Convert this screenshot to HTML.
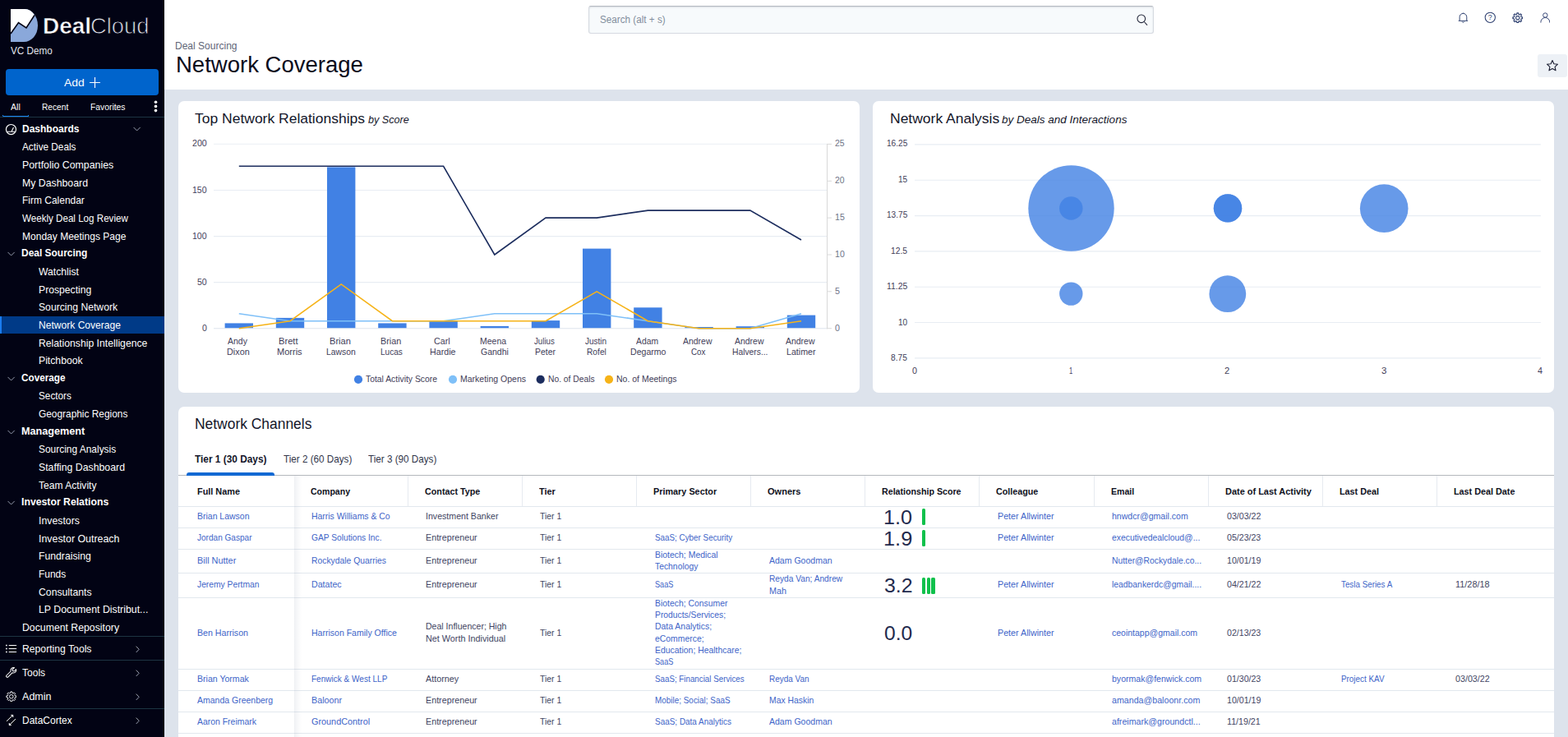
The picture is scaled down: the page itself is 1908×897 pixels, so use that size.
<!DOCTYPE html>
<html lang="en"><head><meta charset="utf-8"><title>Network Coverage - DealCloud</title>
<style>
*{box-sizing:border-box;margin:0;padding:0}
html,body{width:1908px;height:897px;overflow:hidden;background:#dde3ec;font-family:"Liberation Sans",sans-serif;color:#1b1d2e}
body{position:relative}
a{text-decoration:none;color:inherit}
ul,li{list-style:none}
.t{position:absolute;white-space:nowrap;font-weight:400;display:block}
.abs,.ic{position:absolute}
#side{position:absolute;left:0;top:0;width:200px;height:897px;background:#020314;color:#fff;overflow:hidden}
#add{position:absolute;left:7px;top:84px;width:186px;height:32px;border-radius:4px;background:#0064cc;color:#fff}
.sline{position:absolute;left:0;width:200px;height:1px;background:#1c3442}
.selbg{position:absolute;left:0;width:200px;height:21px;background:#003a87;border-left:2px solid #1a7cf0}
#top{position:absolute;left:200px;top:0;width:1708px;height:109px;background:#fff}
#search{position:absolute;left:516px;top:7px;width:688px;height:34px;border:1px solid #d6dae1;border-top-color:#b4b9c0;border-radius:3px;background:#f7fafc;box-shadow:inset 0 1px 2px rgba(40,50,70,.14)}
#star{position:absolute;left:1671px;top:66px;width:36px;height:28px;border-radius:3px;background:#edf1f6}
.card{position:absolute;background:#fff;border-radius:7px;overflow:hidden}
svg text{font-family:"Liberation Sans",sans-serif}
</style></head>
<body>
<aside id="side">
<svg class="ic" style="left:0;top:0" width="200" height="56" viewBox="0 0 200 56">
<path d="M13 11 H30 C38 11 46 19 46 31 C46 43 38 51 29 51 H13 Z" fill="#8aa8da"/>
<path d="M13 11 H30 C35 11 39.5 14 42 18.5 L32 34 L22.5 27.5 L13 41 Z" fill="#ffffff"/>
<path d="M13 41 L22.5 27.5 L32 34 L42 18.5" fill="none" stroke="#020314" stroke-width="1.6"/>
</svg>
<span class="t" style="left:51.62px;top:16.40px;font-size:28px;line-height:31px;transform:scaleX(0.9986);transform-origin:0 25px;font-weight:700;color:#fff;-webkit-text-stroke:0.55px #020314;paint-order:fill stroke">Deal</span><span class="t" style="left:110.08px;top:15.40px;font-size:28.3px;line-height:32px;transform:scaleX(0.9653);transform-origin:0 26px;color:#e6e8f0;-webkit-text-stroke:0.9px #020314;paint-order:fill stroke">Cloud</span>
<span class="t" style="left:13.21px;top:54.70px;font-size:11.9px;line-height:14px;transform:scaleX(0.9840);transform-origin:0 11px;color:#e4e6ee">VC Demo</span>
<div id="add"><svg class="ic" style="left:102px;top:10px" width="13" height="13" viewBox="0 0 13 13"><path d="M6.5 0V13M0 6.5H13" stroke="#fff" stroke-width="1.1" fill="none"/></svg></div>
<span class="t" style="left:78.00px;top:92.90px;font-size:12.9px;line-height:15px;transform:scaleX(1.0803);transform-origin:0 12px;color:#fff">Add</span>
<span class="t" style="left:13.20px;top:124.20px;font-size:11.5px;line-height:12px;transform:scaleX(0.9237);transform-origin:0 10px;color:#fff">All</span><span class="t" style="left:51.09px;top:124.20px;font-size:11.5px;line-height:12px;transform:scaleX(0.8837);transform-origin:0 10px;color:#fff">Recent</span><span class="t" style="left:110.37px;top:124.20px;font-size:11.5px;line-height:12px;transform:scaleX(0.8989);transform-origin:0 10px;color:#fff">Favorites</span>
<svg class="ic" style="left:187px;top:122.1px" width="5" height="15" viewBox="0 0 5 15"><circle cx="2.5" cy="2.2" r="1.8" fill="#fff"/><circle cx="2.5" cy="7.4" r="1.8" fill="#fff"/><circle cx="2.5" cy="12.6" r="1.8" fill="#fff"/></svg>
<div class="abs" style="left:3px;top:140px;width:32px;height:2px;border:1px solid #1a86f2;border-top:0;border-radius:0 0 1.5px 1.5px"></div><div class="sline" style="top:142px"></div>
<nav>
<a class="t" style="left:27.15px;top:149.40px;font-size:13.6px;line-height:15px;transform:scaleX(0.8832);transform-origin:0 12px;font-weight:700;color:#fff">Dashboards</a><svg class="ic" style="left:161.8px;top:154.2px" width="10" height="6" viewBox="0 0 10 6"><path d="M0.5 0.9L4.6 5L8.7 0.9" fill="none" stroke="#959cad" stroke-width="1"/></svg>
<a class="t" style="left:27.10px;top:171.40px;font-size:13.6px;line-height:15px;transform:scaleX(0.8664);transform-origin:0 12px;color:#fff">Active Deals</a>
<a class="t" style="left:27.11px;top:193.40px;font-size:13.6px;line-height:15px;transform:scaleX(0.9082);transform-origin:0 12px;color:#fff">Portfolio Companies</a>
<a class="t" style="left:27.12px;top:215.40px;font-size:13.6px;line-height:15px;transform:scaleX(0.9048);transform-origin:0 12px;color:#fff">My Dashboard</a>
<a class="t" style="left:27.14px;top:236.40px;font-size:13.6px;line-height:15px;transform:scaleX(0.8809);transform-origin:0 12px;color:#fff">Firm Calendar</a>
<a class="t" style="left:27.11px;top:258.40px;font-size:13.6px;line-height:15px;transform:scaleX(0.8538);transform-origin:0 12px;color:#fff">Weekly Deal Log Review</a>
<a class="t" style="left:27.14px;top:280.40px;font-size:13.6px;line-height:15px;transform:scaleX(0.8848);transform-origin:0 12px;color:#fff">Monday Meetings Page</a>
<a class="t" style="left:26.06px;top:300.40px;font-size:13.6px;line-height:15px;transform:scaleX(0.8793);transform-origin:0 12px;font-weight:700;color:#fff">Deal Sourcing</a><svg class="ic" style="left:8.8px;top:306.2px" width="10" height="6" viewBox="0 0 10 6"><path d="M0.5 0.9L4.6 5L8.7 0.9" fill="none" stroke="#959cad" stroke-width="1"/></svg>
<a class="t" style="left:47.00px;top:323.40px;font-size:13.6px;line-height:15px;transform:scaleX(0.8948);transform-origin:0 12px;color:#fff">Watchlist</a>
<a class="t" style="left:47.12px;top:345.40px;font-size:13.6px;line-height:15px;transform:scaleX(0.8964);transform-origin:0 12px;color:#fff">Prospecting</a>
<a class="t" style="left:47.03px;top:366.40px;font-size:13.6px;line-height:15px;transform:scaleX(0.8953);transform-origin:0 12px;color:#fff">Sourcing Network</a>
<div class="selbg" style="top:384.7px"></div><a class="t" style="left:47.23px;top:388.40px;font-size:13.6px;line-height:15px;transform:scaleX(0.8881);transform-origin:0 12px;color:#fff">Network Coverage</a>
<a class="t" style="left:47.22px;top:410.40px;font-size:13.6px;line-height:15px;transform:scaleX(0.8983);transform-origin:0 12px;color:#fff">Relationship Intelligence</a>
<a class="t" style="left:47.22px;top:431.40px;font-size:13.6px;line-height:15px;transform:scaleX(0.8991);transform-origin:0 12px;color:#fff">Pitchbook</a>
<a class="t" style="left:26.04px;top:452.40px;font-size:13.6px;line-height:15px;transform:scaleX(0.8647);transform-origin:0 12px;font-weight:700;color:#fff">Coverage</a><svg class="ic" style="left:8.8px;top:458.2px" width="10" height="6" viewBox="0 0 10 6"><path d="M0.5 0.9L4.6 5L8.7 0.9" fill="none" stroke="#959cad" stroke-width="1"/></svg>
<a class="t" style="left:47.05px;top:474.40px;font-size:13.6px;line-height:15px;transform:scaleX(0.8646);transform-origin:0 12px;color:#fff">Sectors</a>
<a class="t" style="left:47.05px;top:496.40px;font-size:13.6px;line-height:15px;transform:scaleX(0.8742);transform-origin:0 12px;color:#fff">Geographic Regions</a>
<a class="t" style="left:26.01px;top:517.40px;font-size:13.6px;line-height:15px;transform:scaleX(0.9292);transform-origin:0 12px;font-weight:700;color:#fff">Management</a><svg class="ic" style="left:8.8px;top:523.2px" width="10" height="6" viewBox="0 0 10 6"><path d="M0.5 0.9L4.6 5L8.7 0.9" fill="none" stroke="#959cad" stroke-width="1"/></svg>
<a class="t" style="left:47.04px;top:539.40px;font-size:13.6px;line-height:15px;transform:scaleX(0.8780);transform-origin:0 12px;color:#fff">Sourcing Analysis</a>
<a class="t" style="left:47.03px;top:561.40px;font-size:13.6px;line-height:15px;transform:scaleX(0.9038);transform-origin:0 12px;color:#fff">Staffing Dashboard</a>
<a class="t" style="left:47.22px;top:583.40px;font-size:13.6px;line-height:15px;transform:scaleX(0.8882);transform-origin:0 12px;color:#fff">Team Activity</a>
<a class="t" style="left:26.04px;top:603.40px;font-size:13.6px;line-height:15px;transform:scaleX(0.9011);transform-origin:0 12px;font-weight:700;color:#fff">Investor Relations</a><svg class="ic" style="left:8.8px;top:609.2px" width="10" height="6" viewBox="0 0 10 6"><path d="M0.5 0.9L4.6 5L8.7 0.9" fill="none" stroke="#959cad" stroke-width="1"/></svg>
<a class="t" style="left:47.09px;top:626.40px;font-size:13.6px;line-height:15px;transform:scaleX(0.9056);transform-origin:0 12px;color:#fff">Investors</a>
<a class="t" style="left:47.09px;top:648.40px;font-size:13.6px;line-height:15px;transform:scaleX(0.9109);transform-origin:0 12px;color:#fff">Investor Outreach</a>
<a class="t" style="left:47.12px;top:669.40px;font-size:13.6px;line-height:15px;transform:scaleX(0.8989);transform-origin:0 12px;color:#fff">Fundraising</a>
<a class="t" style="left:47.14px;top:691.40px;font-size:13.6px;line-height:15px;transform:scaleX(0.8801);transform-origin:0 12px;color:#fff">Funds</a>
<a class="t" style="left:47.03px;top:713.40px;font-size:13.6px;line-height:15px;transform:scaleX(0.8996);transform-origin:0 12px;color:#fff">Consultants</a>
<a class="t" style="left:47.11px;top:734.40px;font-size:13.6px;line-height:15px;transform:scaleX(0.9069);transform-origin:0 12px;color:#fff">LP Document Distribut...</a>
<a class="t" style="left:27.12px;top:756.40px;font-size:13.6px;line-height:15px;transform:scaleX(0.9030);transform-origin:0 12px;color:#fff">Document Repository</a>
<a class="t" style="left:27.12px;top:782.40px;font-size:13.6px;line-height:15px;transform:scaleX(0.8966);transform-origin:0 12px;color:#fff">Reporting Tools</a><svg class="ic" style="left:164.6px;top:785.9px" width="6" height="10" viewBox="0 0 6 10"><path d="M0.7 0.6L4.2 4.3L0.7 8" fill="none" stroke="#9aa0b0" stroke-width="1"/></svg>
<a class="t" style="left:27.12px;top:811.40px;font-size:13.6px;line-height:15px;transform:scaleX(0.8850);transform-origin:0 12px;color:#fff">Tools</a><svg class="ic" style="left:164.6px;top:814.9px" width="6" height="10" viewBox="0 0 6 10"><path d="M0.7 0.6L4.2 4.3L0.7 8" fill="none" stroke="#9aa0b0" stroke-width="1"/></svg>
<a class="t" style="left:27.10px;top:840.40px;font-size:13.6px;line-height:15px;transform:scaleX(0.9238);transform-origin:0 12px;color:#fff">Admin</a><svg class="ic" style="left:164.6px;top:843.9px" width="6" height="10" viewBox="0 0 6 10"><path d="M0.7 0.6L4.2 4.3L0.7 8" fill="none" stroke="#9aa0b0" stroke-width="1"/></svg>
<a class="t" style="left:27.14px;top:869.40px;font-size:13.6px;line-height:15px;transform:scaleX(0.8832);transform-origin:0 12px;color:#fff">DataCortex</a><svg class="ic" style="left:164.6px;top:872.9px" width="6" height="10" viewBox="0 0 6 10"><path d="M0.7 0.6L4.2 4.3L0.7 8" fill="none" stroke="#9aa0b0" stroke-width="1"/></svg>
</nav>
<div class="sline" style="top:774px"></div><div class="sline" style="top:803px"></div><div class="sline" style="top:861.5px"></div>
<svg class="ic" style="left:6px;top:149.5px" width="15" height="15" viewBox="0 0 15 15"><circle cx="7.46" cy="7.5" r="6.05" fill="none" stroke="#fff" stroke-width="1.15"/><path d="M1.9 10.2H13.1M8.2 9.8L10.5 5" fill="none" stroke="#fff" stroke-width="1.1"/></svg>
<svg class="ic" style="left:6px;top:783px" width="15" height="13" viewBox="0 0 15 13"><path d="M4.7 2.5H14.1M4.7 6.5H14.1M4.7 10.5H14.1" stroke="#fff" stroke-width="1" fill="none"/><path d="M1 2.5H2.7M1 6.5H2.7M1 10.5H2.7" stroke="#fff" stroke-width="1.3" fill="none"/></svg>
<svg class="ic" style="left:6px;top:811px" width="15" height="15" viewBox="0 0 15 15"><path d="M13.7 4.5a3.5 3.5 0 0 1-4.8 3.3L3.9 12.9a1.3 1.3 0 0 1-1.9-1.9l5.1-5A3.5 3.5 0 0 1 11.4 1.6L9.1 3.9l0.4 1.7 1.7 0.4 2.3-2.3z" fill="none" stroke="#fff" stroke-width="1.05" stroke-linejoin="round"/></svg>
<svg class="ic" style="left:6.6px;top:840.7px" width="13.6" height="13.6" viewBox="0 0 15 15"><path d="M6.22 2.67 L6.47 0.98 L8.53 0.98 L8.78 2.67 L10.01 3.18 L11.38 2.16 L12.84 3.62 L11.82 4.99 L12.33 6.22 L14.02 6.47 L14.02 8.53 L12.33 8.78 L11.82 10.01 L12.84 11.38 L11.38 12.84 L10.01 11.82 L8.78 12.33 L8.53 14.02 L6.47 14.02 L6.22 12.33 L4.99 11.82 L3.62 12.84 L2.16 11.38 L3.18 10.01 L2.67 8.78 L0.98 8.53 L0.98 6.47 L2.67 6.22 L3.18 4.99 L2.16 3.62 L3.62 2.16 L4.99 3.18Z" fill="none" stroke="#fff" stroke-width="1.05" stroke-linejoin="round"/><rect x="5.1" y="5.1" width="4.8" height="4.8" rx="2" fill="none" stroke="#fff" stroke-width="1.05"/></svg>
<svg class="ic" style="left:7px;top:869px" width="14" height="15" viewBox="0 0 14 15"><path d="M1 8.8L8.6 1.5M12 6.1L4.4 13.4" fill="none" stroke="#fff" stroke-width="1"/><path d="M6.3 1.2H9V3.9ZM6.7 13.7H4V11Z" fill="#fff" stroke="#fff" stroke-width="0.5" stroke-linejoin="miter"/></svg>
</aside>
<header id="top">
<div id="search"><svg class="ic" style="left:666px;top:9px" width="14" height="15" viewBox="0 0 14 15"><circle cx="5.8" cy="5.8" r="4.8" fill="none" stroke="#23273a" stroke-width="1.1"/><path d="M9.3 9.5L13 13.6" stroke="#23273a" stroke-width="1.1" fill="none"/></svg></div>
<span class="t" style="left:530.37px;top:16.80px;font-size:12px;line-height:14px;transform:scaleX(0.9752);transform-origin:0 11px;color:#828e9d">Search (alt + s)</span>
<span class="t" style="left:13.24px;top:48.90px;font-size:12.3px;line-height:14px;transform:scaleX(0.9780);transform-origin:0 11px;color:#5f6577">Deal Sourcing</span>
<h1 class="t" style="left:13.70px;top:62.20px;font-size:28.2px;line-height:32px;transform:scaleX(0.9762);transform-origin:0 26px;color:#0b0c1c">Network Coverage</h1>
<svg class="ic" style="left:1573.7px;top:15.3px" width="12.9" height="13.8" viewBox="0 0 14 15"><path d="M2.3 11V6.2a4.7 4.7 0 0 1 9.4 0V11M0.8 11.2H13.2M5.6 12.4a1.5 1.5 0 0 0 2.8 0M7 0.6V1.6" fill="none" stroke="#2b3d6e" stroke-width="1.05"/></svg>
<svg class="ic" style="left:1606.3px;top:14.2px" width="14.6" height="14.6" viewBox="0 0 15 15"><circle cx="7.5" cy="7.5" r="6.3" fill="none" stroke="#2b3d6e" stroke-width="1.05"/><text x="7.5" y="10.7" font-size="9" text-anchor="middle" fill="#2b3d6e">?</text></svg>
<svg class="ic" style="left:1639.85px;top:14.7px" width="13.5" height="13.5" viewBox="0 0 15 15"><path d="M6.22 2.67 L6.47 0.98 L8.53 0.98 L8.78 2.67 L10.01 3.18 L11.38 2.16 L12.84 3.62 L11.82 4.99 L12.33 6.22 L14.02 6.47 L14.02 8.53 L12.33 8.78 L11.82 10.01 L12.84 11.38 L11.38 12.84 L10.01 11.82 L8.78 12.33 L8.53 14.02 L6.47 14.02 L6.22 12.33 L4.99 11.82 L3.62 12.84 L2.16 11.38 L3.18 10.01 L2.67 8.78 L0.98 8.53 L0.98 6.47 L2.67 6.22 L3.18 4.99 L2.16 3.62 L3.62 2.16 L4.99 3.18Z" fill="none" stroke="#2b3d6e" stroke-width="1.25" stroke-linejoin="round"/><rect x="5.1" y="5.1" width="4.8" height="4.8" rx="2" fill="none" stroke="#2b3d6e" stroke-width="1.25"/></svg>
<svg class="ic" style="left:1673.8px;top:14.5px" width="12.6" height="13.5" viewBox="0 0 14 15"><circle cx="7" cy="3.9" r="3" fill="none" stroke="#2b3d6e" stroke-width="1.05"/><path d="M1 14V13.2a6 6 0 0 1 12 0V14" fill="none" stroke="#2b3d6e" stroke-width="1.05"/></svg>
<div id="star"><svg class="ic" style="left:10px;top:6px" width="16" height="16" viewBox="0 0 16 16"><path d="M8 1.5l1.9 4.2 4.6.5-3.4 3.1.95 4.5L8 11.5 3.95 13.8l.95-4.5L1.5 6.2l4.6-.5z" fill="none" stroke="#1c1f33" stroke-width="1.1" stroke-linejoin="round"/></svg></div>
</header>
<section class="card" style="left:217px;top:123px;width:829px;height:355px">
<h2 class="t" style="left:19.64px;top:11.00px;font-size:17.4px;line-height:20px;transform:scaleX(1.0056);transform-origin:0 16px;color:#14162a">Top Network Relationships</h2><span class="t" style="left:230.98px;top:15.00px;font-size:13.5px;line-height:15px;transform:scaleX(0.9344);transform-origin:0 12px;font-style:italic;color:#14162a">by Score</span>
<svg class="abs" style="left:0;top:0" width="829" height="355" viewBox="217 123 829 355">
<path d="M260 175.4H1006" stroke="#eff2f6" stroke-width="1.1"/><path d="M260 231.5H1006" stroke="#e8edf3" stroke-width="1.1"/><path d="M260 287.6H1006" stroke="#e8edf3" stroke-width="1.1"/><path d="M260 343.6H1006" stroke="#e8edf3" stroke-width="1.1"/><path d="M260 399.7H1006" stroke="#dde4ec" stroke-width="1.1"/><path d="M1006.5 175V400.3" stroke="#d9d9d9" stroke-width="1"/><path d="M1006 175.4H1012" stroke="#d9d9d9" stroke-width="1"/><path d="M1006 220.3H1012" stroke="#d9d9d9" stroke-width="1"/><path d="M1006 265.1H1012" stroke="#d9d9d9" stroke-width="1"/><path d="M1006 310.0H1012" stroke="#d9d9d9" stroke-width="1"/><path d="M1006 354.8H1012" stroke="#d9d9d9" stroke-width="1"/><path d="M1006 399.7H1012" stroke="#d9d9d9" stroke-width="1"/><rect x="273.6" y="393.4" width="34.4" height="5.8" fill="#4181e4"/><rect x="335.8" y="386.9" width="34.4" height="12.3" fill="#4181e4"/><rect x="398.0" y="203.4" width="34.4" height="195.8" fill="#4181e4"/><rect x="460.2" y="393.4" width="34.4" height="5.8" fill="#4181e4"/><rect x="522.4" y="390.6" width="34.4" height="8.6" fill="#4181e4"/><rect x="584.6" y="396.9" width="34.4" height="2.3" fill="#4181e4"/><rect x="646.8" y="390.1" width="34.4" height="9.1" fill="#4181e4"/><rect x="709.0" y="302.6" width="34.4" height="96.6" fill="#4181e4"/><rect x="771.2" y="374.3" width="34.4" height="24.9" fill="#4181e4"/><rect x="833.4" y="398.0" width="34.4" height="1.2" fill="#4181e4"/><rect x="895.6" y="397.2" width="34.4" height="2.0" fill="#4181e4"/><rect x="957.8" y="383.6" width="34.4" height="15.6" fill="#4181e4"/><polyline points="290.8,202.3 353.0,202.3 415.2,202.3 477.4,202.3 539.6,202.3 601.8,310.0 664.0,265.1 726.2,265.1 788.4,256.1 850.6,256.1 912.8,256.1 975.0,292.0" fill="none" stroke="#1c2d5e" stroke-width="1.6" stroke-linejoin="miter"/><polyline points="290.8,381.8 353.0,390.7 415.2,390.7 477.4,390.7 539.6,390.7 601.8,381.8 664.0,381.8 726.2,381.8 788.4,390.7 850.6,399.7 912.8,399.7 975.0,381.8" fill="none" stroke="#7fc0f8" stroke-width="1.6" stroke-linejoin="miter"/><polyline points="290.8,399.7 353.0,390.7 415.2,345.9 477.4,390.7 539.6,390.7 601.8,390.7 664.0,390.7 726.2,354.8 788.4,390.7 850.6,399.7 912.8,399.7 975.0,390.7" fill="none" stroke="#f6b318" stroke-width="1.6" stroke-linejoin="miter"/><circle cx="436" cy="461.8" r="5.1" fill="#4181e4"/><circle cx="551" cy="461.8" r="5.1" fill="#7fc0f8"/><circle cx="657.7" cy="461.8" r="5.1" fill="#1c2d5e"/><circle cx="741" cy="461.8" r="5.1" fill="#f6b318"/></svg>
<span class="t" style="left:17.08px;top:45.00px;font-size:11.5px;line-height:12px;transform:scaleX(0.9238);transform-origin:0 10px;color:#3f3d58">200</span><span class="t" style="left:17.21px;top:102.00px;font-size:11.5px;line-height:12px;transform:scaleX(0.9171);transform-origin:0 10px;color:#3f3d58">150</span><span class="t" style="left:17.21px;top:158.00px;font-size:11.5px;line-height:12px;transform:scaleX(0.9171);transform-origin:0 10px;color:#3f3d58">100</span><span class="t" style="left:23.05px;top:214.00px;font-size:11.5px;line-height:12px;transform:scaleX(0.9182);transform-origin:0 10px;color:#3f3d58">50</span><span class="t" style="left:28.95px;top:270.00px;font-size:11.5px;line-height:12px;transform:scaleX(0.9110);transform-origin:0 10px;color:#3f3d58">0</span>
<span class="t" style="left:798.99px;top:45.00px;font-size:11.5px;line-height:12px;transform:scaleX(0.9110);transform-origin:0 10px;color:#6e7385">25</span><span class="t" style="left:798.99px;top:90.00px;font-size:11.5px;line-height:12px;transform:scaleX(0.9065);transform-origin:0 10px;color:#6e7385">20</span><span class="t" style="left:798.80px;top:135.00px;font-size:11.5px;line-height:12px;transform:scaleX(0.9264);transform-origin:0 10px;color:#6e7385">15</span><span class="t" style="left:798.80px;top:180.00px;font-size:11.5px;line-height:12px;transform:scaleX(0.9217);transform-origin:0 10px;color:#6e7385">10</span><span class="t" style="left:799.04px;top:225.00px;font-size:11.5px;line-height:12px;transform:scaleX(0.9389);transform-origin:0 10px;color:#6e7385">5</span><span class="t" style="left:799.04px;top:270.00px;font-size:11.5px;line-height:12px;transform:scaleX(0.9291);transform-origin:0 10px;color:#6e7385">0</span>
<span class="t" style="left:59.70px;top:286.00px;font-size:11.5px;line-height:12px;transform:scaleX(0.9115);transform-origin:0 10px;color:#3f3d58">Andy</span><span class="t" style="left:59.13px;top:299.00px;font-size:11.5px;line-height:12px;transform:scaleX(0.9417);transform-origin:0 10px;color:#3f3d58">Dixon</span><span class="t" style="left:122.01px;top:286.00px;font-size:11.5px;line-height:12px;transform:scaleX(0.9705);transform-origin:0 10px;color:#3f3d58">Brett</span><span class="t" style="left:120.02px;top:299.00px;font-size:11.5px;line-height:12px;transform:scaleX(0.9593);transform-origin:0 10px;color:#3f3d58">Morris</span><span class="t" style="left:183.71px;top:286.00px;font-size:11.5px;line-height:12px;transform:scaleX(0.9649);transform-origin:0 10px;color:#3f3d58">Brian</span><span class="t" style="left:180.17px;top:299.00px;font-size:11.5px;line-height:12px;transform:scaleX(0.9012);transform-origin:0 10px;color:#3f3d58">Lawson</span><span class="t" style="left:245.84px;top:286.00px;font-size:11.5px;line-height:12px;transform:scaleX(0.9371);transform-origin:0 10px;color:#3f3d58">Brian</span><span class="t" style="left:246.10px;top:299.00px;font-size:11.5px;line-height:12px;transform:scaleX(0.8747);transform-origin:0 10px;color:#3f3d58">Lucas</span><span class="t" style="left:311.28px;top:286.00px;font-size:11.5px;line-height:12px;transform:scaleX(0.9322);transform-origin:0 10px;color:#3f3d58">Carl</span><span class="t" style="left:306.25px;top:299.00px;font-size:11.5px;line-height:12px;transform:scaleX(0.9282);transform-origin:0 10px;color:#3f3d58">Hardie</span><span class="t" style="left:367.36px;top:286.00px;font-size:11.5px;line-height:12px;transform:scaleX(0.9119);transform-origin:0 10px;color:#3f3d58">Meena</span><span class="t" style="left:367.89px;top:299.00px;font-size:11.5px;line-height:12px;transform:scaleX(0.9139);transform-origin:0 10px;color:#3f3d58">Gandhi</span><span class="t" style="left:432.62px;top:286.00px;font-size:11.5px;line-height:12px;transform:scaleX(0.8448);transform-origin:0 10px;color:#3f3d58">Julius</span><span class="t" style="left:433.87px;top:299.00px;font-size:11.5px;line-height:12px;transform:scaleX(0.9075);transform-origin:0 10px;color:#3f3d58">Peter</span><span class="t" style="left:494.71px;top:286.00px;font-size:11.5px;line-height:12px;transform:scaleX(0.8708);transform-origin:0 10px;color:#3f3d58">Justin</span><span class="t" style="left:497.08px;top:299.00px;font-size:11.5px;line-height:12px;transform:scaleX(0.8875);transform-origin:0 10px;color:#3f3d58">Rofel</span><span class="t" style="left:557.00px;top:286.00px;font-size:11.5px;line-height:12px;transform:scaleX(0.9003);transform-origin:0 10px;color:#3f3d58">Adam</span><span class="t" style="left:549.85px;top:299.00px;font-size:11.5px;line-height:12px;transform:scaleX(0.9197);transform-origin:0 10px;color:#3f3d58">Degarmo</span><span class="t" style="left:614.30px;top:286.00px;font-size:11.5px;line-height:12px;transform:scaleX(0.9093);transform-origin:0 10px;color:#3f3d58">Andrew</span><span class="t" style="left:624.12px;top:299.00px;font-size:11.5px;line-height:12px;transform:scaleX(0.8537);transform-origin:0 10px;color:#3f3d58">Cox</span><span class="t" style="left:676.70px;top:286.00px;font-size:11.5px;line-height:12px;transform:scaleX(0.9093);transform-origin:0 10px;color:#3f3d58">Andrew</span><span class="t" style="left:674.18px;top:299.00px;font-size:11.5px;line-height:12px;transform:scaleX(0.8953);transform-origin:0 10px;color:#3f3d58">Halvers...</span><span class="t" style="left:739.10px;top:286.00px;font-size:11.5px;line-height:12px;transform:scaleX(0.9093);transform-origin:0 10px;color:#3f3d58">Andrew</span><span class="t" style="left:740.05px;top:299.00px;font-size:11.5px;line-height:12px;transform:scaleX(0.9247);transform-origin:0 10px;color:#3f3d58">Latimer</span>
<span class="t" style="left:228.18px;top:332.00px;font-size:11.2px;line-height:12px;transform:scaleX(0.9268);transform-origin:0 10px;color:#3f3d58">Total Activity Score</span><span class="t" style="left:342.76px;top:332.00px;font-size:11.2px;line-height:12px;transform:scaleX(0.9393);transform-origin:0 10px;color:#3f3d58">Marketing Opens</span><span class="t" style="left:449.78px;top:332.00px;font-size:11.2px;line-height:12px;transform:scaleX(0.9194);transform-origin:0 10px;color:#3f3d58">No. of Deals</span><span class="t" style="left:533.06px;top:332.00px;font-size:11.2px;line-height:12px;transform:scaleX(0.9382);transform-origin:0 10px;color:#3f3d58">No. of Meetings</span>
</section>
<section class="card" style="left:1062px;top:123px;width:829px;height:355px">
<h2 class="t" style="left:20.60px;top:11.00px;font-size:17.4px;line-height:20px;transform:scaleX(1.0061);transform-origin:0 16px;color:#14162a">Network Analysis</h2><span class="t" style="left:157.16px;top:15.00px;font-size:13.5px;line-height:15px;transform:scaleX(1.0004);transform-origin:0 12px;font-style:italic;color:#14162a">by Deals and Interactions</span>
<svg class="abs" style="left:0;top:0" width="829" height="355" viewBox="1062 123 829 355">
<path d="M1113 175.9H1874.8" stroke="#e8edf3" stroke-width="1.1"/><path d="M1113 219.2H1874.8" stroke="#e8edf3" stroke-width="1.1"/><path d="M1113 262.6H1874.8" stroke="#e8edf3" stroke-width="1.1"/><path d="M1113 305.9H1874.8" stroke="#e8edf3" stroke-width="1.1"/><path d="M1113 349.2H1874.8" stroke="#e8edf3" stroke-width="1.1"/><path d="M1113 392.5H1874.8" stroke="#e8edf3" stroke-width="1.1"/><path d="M1113 435.9H1874.8" stroke="#e8edf3" stroke-width="1.1"/><circle cx="1303.5" cy="253.5" r="52.2" fill="#4181e4" fill-opacity="0.8"/><circle cx="1303.3" cy="253.5" r="14.2" fill="#4181e4" fill-opacity="0.8"/><circle cx="1494" cy="253.4" r="17.2" fill="#4181e4" fill-opacity="0.8"/><circle cx="1494" cy="253.4" r="17.2" fill="#4181e4" fill-opacity="0.8"/><circle cx="1684.2" cy="253.6" r="29.3" fill="#4181e4" fill-opacity="0.8"/><circle cx="1303.3" cy="357.6" r="14.2" fill="#4181e4" fill-opacity="0.8"/><circle cx="1493.8" cy="357.7" r="22.4" fill="#4181e4" fill-opacity="0.8"/></svg>
<span class="t" style="left:16.94px;top:45.00px;font-size:11.5px;line-height:12px;transform:scaleX(0.8787);transform-origin:0 10px;color:#3f3d58">16.25</span><span class="t" style="left:31.05px;top:89.00px;font-size:11.5px;line-height:12px;transform:scaleX(0.8739);transform-origin:0 10px;color:#3f3d58">15</span><span class="t" style="left:16.94px;top:132.00px;font-size:11.5px;line-height:12px;transform:scaleX(0.8787);transform-origin:0 10px;color:#3f3d58">13.75</span><span class="t" style="left:22.23px;top:176.00px;font-size:11.5px;line-height:12px;transform:scaleX(0.8933);transform-origin:0 10px;color:#3f3d58">12.5</span><span class="t" style="left:16.92px;top:219.00px;font-size:11.5px;line-height:12px;transform:scaleX(0.9072);transform-origin:0 10px;color:#3f3d58">11.25</span><span class="t" style="left:31.05px;top:263.00px;font-size:11.5px;line-height:12px;transform:scaleX(0.8696);transform-origin:0 10px;color:#3f3d58">10</span><span class="t" style="left:22.44px;top:306.00px;font-size:11.5px;line-height:12px;transform:scaleX(0.8839);transform-origin:0 10px;color:#3f3d58">8.75</span>
<span class="t" style="left:47.64px;top:322.30px;font-size:11.5px;line-height:12px;transform:scaleX(0.9291);transform-origin:0 10px;color:#3f3d58">0</span><span class="t" style="left:238.73px;top:322.30px;font-size:11.5px;line-height:12px;transform:scaleX(0.6597);transform-origin:0 10px;color:#3f3d58">1</span><span class="t" style="left:428.26px;top:322.30px;font-size:11.5px;line-height:12px;transform:scaleX(0.9719);transform-origin:0 10px;color:#3f3d58">2</span><span class="t" style="left:619.01px;top:322.30px;font-size:11.5px;line-height:12px;transform:scaleX(0.9938);transform-origin:0 10px;color:#3f3d58">3</span><span class="t" style="left:808.67px;top:322.30px;font-size:11.5px;line-height:12px;transform:scaleX(0.9323);transform-origin:0 10px;color:#3f3d58">4</span>
</section>
<style>
.row{position:absolute;left:0;width:1674px;height:1px;background:#e2e8ee}
.vsep{position:absolute;top:84px;width:1px;height:37px;background:#e6eaf0}
.bar{position:absolute;width:4.3px;height:19.5px;border-radius:1.5px;background:#0fc14c}
.shadow{position:absolute;left:140px;top:84px;width:13px;height:900px;background:linear-gradient(90deg,rgba(150,160,180,0) 0,rgba(150,160,180,0) 0.6px,rgba(150,160,180,.20) 0.7px,rgba(150,160,180,.12) 2px,rgba(150,160,180,0) 10px);z-index:3}
</style>
<section class="card" style="left:217px;top:495px;width:1674px;height:420px;border-radius:7px 7px 0 0">
<h2 class="t" style="left:20.11px;top:11.40px;font-size:17.6px;line-height:20px;transform:scaleX(0.9904);transform-origin:0 16px;color:#14162a">Network Channels</h2>
<span class="t" style="left:20.02px;top:56.90px;font-size:12.2px;line-height:14px;transform:scaleX(0.9733);transform-origin:0 11px;font-weight:700;color:#14162a">Tier 1 (30 Days)</span><span class="t" style="left:127.75px;top:56.90px;font-size:12.2px;line-height:14px;transform:scaleX(0.9582);transform-origin:0 11px;color:#32364a">Tier 2 (60 Days)</span><span class="t" style="left:230.75px;top:56.90px;font-size:12.2px;line-height:14px;transform:scaleX(0.9582);transform-origin:0 11px;color:#32364a">Tier 3 (90 Days)</span>
<div class="abs" style="left:10px;top:80px;width:107px;height:4px;background:#1269d3;border-radius:3px 3px 0 0;z-index:2"></div>
<div class="abs" style="left:0;top:82.7px;width:1674px;height:1.4px;background:#b4b8bd"></div>
<div class="vsep" style="left:279.0px"></div><div class="vsep" style="left:418.0px"></div><div class="vsep" style="left:557.0px"></div><div class="vsep" style="left:696.0px"></div><div class="vsep" style="left:835.0px"></div><div class="vsep" style="left:974.0px"></div><div class="vsep" style="left:1114.0px"></div><div class="vsep" style="left:1253.0px"></div><div class="vsep" style="left:1392.0px"></div><div class="vsep" style="left:1531.0px"></div>
<span class="t" style="left:23.00px;top:97.40px;font-size:11.6px;line-height:12px;transform:scaleX(0.9375);transform-origin:0 10px;font-weight:700;color:#0e1020">Full Name</span><span class="t" style="left:161.00px;top:97.40px;font-size:11.6px;line-height:12px;transform:scaleX(0.9094);transform-origin:0 10px;font-weight:700;color:#0e1020">Company</span><span class="t" style="left:300.00px;top:97.40px;font-size:11.6px;line-height:12px;transform:scaleX(0.9265);transform-origin:0 10px;font-weight:700;color:#0e1020">Contact Type</span><span class="t" style="left:439.00px;top:97.40px;font-size:11.6px;line-height:12px;transform:scaleX(0.9435);transform-origin:0 10px;font-weight:700;color:#0e1020">Tier</span><span class="t" style="left:578.00px;top:97.40px;font-size:11.6px;line-height:12px;transform:scaleX(0.9349);transform-origin:0 10px;font-weight:700;color:#0e1020">Primary Sector</span><span class="t" style="left:717.00px;top:97.40px;font-size:11.6px;line-height:12px;transform:scaleX(0.9512);transform-origin:0 10px;font-weight:700;color:#0e1020">Owners</span><span class="t" style="left:856.00px;top:97.40px;font-size:11.6px;line-height:12px;transform:scaleX(0.9194);transform-origin:0 10px;font-weight:700;color:#0e1020">Relationship Score</span><span class="t" style="left:995.00px;top:97.40px;font-size:11.6px;line-height:12px;transform:scaleX(0.9266);transform-origin:0 10px;font-weight:700;color:#0e1020">Colleague</span><span class="t" style="left:1135.00px;top:97.40px;font-size:11.6px;line-height:12px;transform:scaleX(0.9118);transform-origin:0 10px;font-weight:700;color:#0e1020">Email</span><span class="t" style="left:1274.00px;top:97.40px;font-size:11.6px;line-height:12px;transform:scaleX(0.9440);transform-origin:0 10px;font-weight:700;color:#0e1020">Date of Last Activity</span><span class="t" style="left:1413.00px;top:97.40px;font-size:11.6px;line-height:12px;transform:scaleX(0.9310);transform-origin:0 10px;font-weight:700;color:#0e1020">Last Deal</span><span class="t" style="left:1552.00px;top:97.40px;font-size:11.6px;line-height:12px;transform:scaleX(0.9319);transform-origin:0 10px;font-weight:700;color:#0e1020">Last Deal Date</span>
<div class="row" style="top:120.9px"></div><div class="row" style="top:147.0px"></div><div class="row" style="top:172.8px"></div><div class="row" style="top:201.7px"></div><div class="row" style="top:231.8px"></div><div class="row" style="top:318.8px"></div><div class="row" style="top:344.9px"></div><div class="row" style="top:371.0px"></div><div class="row" style="top:396.9px"></div>
<a class="t" style="left:23.00px;top:127.00px;font-size:11.5px;line-height:12px;transform:scaleX(0.9109);transform-origin:0 10px;color:#4064c8">Brian Lawson</a><a class="t" style="left:162.00px;top:127.00px;font-size:11.5px;line-height:12px;transform:scaleX(0.9072);transform-origin:0 10px;color:#4064c8">Harris Williams &amp; Co</a><span class="t" style="left:301.00px;top:127.00px;font-size:11.5px;line-height:12px;transform:scaleX(0.9229);transform-origin:0 10px;color:#41445f">Investment Banker</span><span class="t" style="left:440.00px;top:127.00px;font-size:11.5px;line-height:12px;transform:scaleX(0.9029);transform-origin:0 10px;color:#41445f">Tier 1</span><span class="t" style="left:858.01px;top:120.85px;font-size:24.6px;line-height:27px;transform:scaleX(1.0226);transform-origin:0 22px;color:#1f2a4d">1.0</span><i class="bar" style="left:904.8px;top:124.4px"></i><a class="t" style="left:997.00px;top:127.00px;font-size:11.5px;line-height:12px;transform:scaleX(0.9330);transform-origin:0 10px;color:#4064c8">Peter Allwinter</a><a class="t" style="left:1136.00px;top:127.00px;font-size:11.5px;line-height:12px;transform:scaleX(0.9169);transform-origin:0 10px;color:#4064c8">hnwdcr@gmail.com</a><span class="t" style="left:1276.00px;top:127.00px;font-size:11.5px;line-height:12px;transform:scaleX(0.9239);transform-origin:0 10px;color:#41445f">03/03/22</span>
<a class="t" style="left:23.00px;top:153.00px;font-size:11.5px;line-height:12px;transform:scaleX(0.8742);transform-origin:0 10px;color:#4064c8">Jordan Gaspar</a><a class="t" style="left:162.00px;top:153.00px;font-size:11.5px;line-height:12px;transform:scaleX(0.8874);transform-origin:0 10px;color:#4064c8">GAP Solutions Inc.</a><span class="t" style="left:301.00px;top:153.00px;font-size:11.5px;line-height:12px;transform:scaleX(0.9338);transform-origin:0 10px;color:#41445f">Entrepreneur</span><span class="t" style="left:440.00px;top:153.00px;font-size:11.5px;line-height:12px;transform:scaleX(0.9029);transform-origin:0 10px;color:#41445f">Tier 1</span><a class="t" style="left:580.00px;top:153.00px;font-size:11.5px;line-height:12px;transform:scaleX(0.8568);transform-origin:0 10px;color:#4064c8">SaaS; Cyber Security</a><span class="t" style="left:858.00px;top:146.80px;font-size:24.6px;line-height:27px;transform:scaleX(1.0307);transform-origin:0 22px;color:#1f2a4d">1.9</span><i class="bar" style="left:904.8px;top:150.4px"></i><a class="t" style="left:997.00px;top:153.00px;font-size:11.5px;line-height:12px;transform:scaleX(0.9330);transform-origin:0 10px;color:#4064c8">Peter Allwinter</a><a class="t" style="left:1136.00px;top:153.00px;font-size:11.5px;line-height:12px;transform:scaleX(0.9009);transform-origin:0 10px;color:#4064c8">executivedealcloud@...</a><span class="t" style="left:1276.00px;top:153.00px;font-size:11.5px;line-height:12px;transform:scaleX(0.9215);transform-origin:0 10px;color:#41445f">05/23/23</span>
<a class="t" style="left:23.00px;top:181.00px;font-size:11.5px;line-height:12px;transform:scaleX(0.9492);transform-origin:0 10px;color:#4064c8">Bill Nutter</a><a class="t" style="left:162.00px;top:181.00px;font-size:11.5px;line-height:12px;transform:scaleX(0.8999);transform-origin:0 10px;color:#4064c8">Rockydale Quarries</a><span class="t" style="left:301.00px;top:181.00px;font-size:11.5px;line-height:12px;transform:scaleX(0.9338);transform-origin:0 10px;color:#41445f">Entrepreneur</span><span class="t" style="left:440.00px;top:181.00px;font-size:11.5px;line-height:12px;transform:scaleX(0.9029);transform-origin:0 10px;color:#41445f">Tier 1</span><a class="t" style="left:580.00px;top:174.00px;font-size:11.5px;line-height:12px;transform:scaleX(0.9090);transform-origin:0 10px;color:#4064c8">Biotech; Medical</a><a class="t" style="left:580.00px;top:188.00px;font-size:11.5px;line-height:12px;transform:scaleX(0.9005);transform-origin:0 10px;color:#4064c8">Technology</a><a class="t" style="left:719.00px;top:181.00px;font-size:11.5px;line-height:12px;transform:scaleX(0.9148);transform-origin:0 10px;color:#4064c8">Adam Goodman</a><a class="t" style="left:1136.00px;top:181.00px;font-size:11.5px;line-height:12px;transform:scaleX(0.8969);transform-origin:0 10px;color:#4064c8">Nutter@Rockydale.co...</a><span class="t" style="left:1276.00px;top:181.00px;font-size:11.5px;line-height:12px;transform:scaleX(0.9227);transform-origin:0 10px;color:#41445f">10/01/19</span>
<a class="t" style="left:23.00px;top:210.00px;font-size:11.5px;line-height:12px;transform:scaleX(0.8947);transform-origin:0 10px;color:#4064c8">Jeremy Pertman</a><a class="t" style="left:162.00px;top:210.00px;font-size:11.5px;line-height:12px;transform:scaleX(0.9255);transform-origin:0 10px;color:#4064c8">Datatec</a><span class="t" style="left:301.00px;top:210.00px;font-size:11.5px;line-height:12px;transform:scaleX(0.9338);transform-origin:0 10px;color:#41445f">Entrepreneur</span><span class="t" style="left:440.00px;top:210.00px;font-size:11.5px;line-height:12px;transform:scaleX(0.9029);transform-origin:0 10px;color:#41445f">Tier 1</span><a class="t" style="left:580.00px;top:210.00px;font-size:11.5px;line-height:12px;transform:scaleX(0.7935);transform-origin:0 10px;color:#4064c8">SaaS</a><a class="t" style="left:719.00px;top:203.00px;font-size:11.5px;line-height:12px;transform:scaleX(0.8844);transform-origin:0 10px;color:#4064c8">Reyda Van; Andrew</a><a class="t" style="left:719.00px;top:218.00px;font-size:11.5px;line-height:12px;transform:scaleX(0.9389);transform-origin:0 10px;color:#4064c8">Mah</a><span class="t" style="left:858.78px;top:203.65px;font-size:24.6px;line-height:27px;transform:scaleX(1.0109);transform-origin:0 22px;color:#1f2a4d">3.2</span><i class="bar" style="left:904.8px;top:208.4px"></i><i class="bar" style="left:910.6px;top:208.4px"></i><i class="bar" style="left:916.4px;top:208.4px"></i><a class="t" style="left:997.00px;top:210.00px;font-size:11.5px;line-height:12px;transform:scaleX(0.9330);transform-origin:0 10px;color:#4064c8">Peter Allwinter</a><a class="t" style="left:1136.00px;top:210.00px;font-size:11.5px;line-height:12px;transform:scaleX(0.9012);transform-origin:0 10px;color:#4064c8">leadbankerdc@gmail....</a><span class="t" style="left:1276.00px;top:210.00px;font-size:11.5px;line-height:12px;transform:scaleX(0.9239);transform-origin:0 10px;color:#41445f">04/21/22</span><a class="t" style="left:1415.00px;top:210.00px;font-size:11.5px;line-height:12px;transform:scaleX(0.8538);transform-origin:0 10px;color:#4064c8">Tesla Series A</a><span class="t" style="left:1554.00px;top:210.00px;font-size:11.5px;line-height:12px;transform:scaleX(0.9467);transform-origin:0 10px;color:#41445f">11/28/18</span>
<a class="t" style="left:23.00px;top:269.00px;font-size:11.5px;line-height:12px;transform:scaleX(0.9238);transform-origin:0 10px;color:#4064c8">Ben Harrison</a><a class="t" style="left:162.00px;top:269.00px;font-size:11.5px;line-height:12px;transform:scaleX(0.9151);transform-origin:0 10px;color:#4064c8">Harrison Family Office</a><span class="t" style="left:301.00px;top:261.00px;font-size:11.5px;line-height:12px;transform:scaleX(0.9165);transform-origin:0 10px;color:#41445f">Deal Influencer; High</span><span class="t" style="left:301.00px;top:276.00px;font-size:11.5px;line-height:12px;transform:scaleX(0.9407);transform-origin:0 10px;color:#41445f">Net Worth Individual</span><span class="t" style="left:440.00px;top:269.00px;font-size:11.5px;line-height:12px;transform:scaleX(0.9029);transform-origin:0 10px;color:#41445f">Tier 1</span><a class="t" style="left:580.00px;top:233.00px;font-size:11.5px;line-height:12px;transform:scaleX(0.9039);transform-origin:0 10px;color:#4064c8">Biotech; Consumer</a><a class="t" style="left:580.00px;top:247.00px;font-size:11.5px;line-height:12px;transform:scaleX(0.8970);transform-origin:0 10px;color:#4064c8">Products/Services;</a><a class="t" style="left:580.00px;top:261.00px;font-size:11.5px;line-height:12px;transform:scaleX(0.9075);transform-origin:0 10px;color:#4064c8">Data Analytics;</a><a class="t" style="left:580.00px;top:276.00px;font-size:11.5px;line-height:12px;transform:scaleX(0.9058);transform-origin:0 10px;color:#4064c8">eCommerce;</a><a class="t" style="left:580.00px;top:290.00px;font-size:11.5px;line-height:12px;transform:scaleX(0.9068);transform-origin:0 10px;color:#4064c8">Education; Healthcare;</a><a class="t" style="left:580.00px;top:304.00px;font-size:11.5px;line-height:12px;transform:scaleX(0.7935);transform-origin:0 10px;color:#4064c8">SaaS</a><span class="t" style="left:858.79px;top:262.20px;font-size:24.6px;line-height:27px;transform:scaleX(0.9994);transform-origin:0 22px;color:#1f2a4d">0.0</span><a class="t" style="left:997.00px;top:269.00px;font-size:11.5px;line-height:12px;transform:scaleX(0.9330);transform-origin:0 10px;color:#4064c8">Peter Allwinter</a><a class="t" style="left:1136.00px;top:269.00px;font-size:11.5px;line-height:12px;transform:scaleX(0.9133);transform-origin:0 10px;color:#4064c8">ceointapp@gmail.com</a><span class="t" style="left:1276.00px;top:269.00px;font-size:11.5px;line-height:12px;transform:scaleX(0.9215);transform-origin:0 10px;color:#41445f">02/13/23</span>
<a class="t" style="left:23.00px;top:325.00px;font-size:11.5px;line-height:12px;transform:scaleX(0.9178);transform-origin:0 10px;color:#4064c8">Brian Yormak</a><a class="t" style="left:162.00px;top:325.00px;font-size:11.5px;line-height:12px;transform:scaleX(0.8719);transform-origin:0 10px;color:#4064c8">Fenwick &amp; West LLP</a><span class="t" style="left:301.00px;top:325.00px;font-size:11.5px;line-height:12px;transform:scaleX(0.9384);transform-origin:0 10px;color:#41445f">Attorney</span><span class="t" style="left:440.00px;top:325.00px;font-size:11.5px;line-height:12px;transform:scaleX(0.9029);transform-origin:0 10px;color:#41445f">Tier 1</span><a class="t" style="left:580.00px;top:325.00px;font-size:11.5px;line-height:12px;transform:scaleX(0.8499);transform-origin:0 10px;color:#4064c8">SaaS; Financial Services</a><a class="t" style="left:719.00px;top:325.00px;font-size:11.5px;line-height:12px;transform:scaleX(0.8678);transform-origin:0 10px;color:#4064c8">Reyda Van</a><a class="t" style="left:1136.00px;top:325.00px;font-size:11.5px;line-height:12px;transform:scaleX(0.9169);transform-origin:0 10px;color:#4064c8">byormak@fenwick.com</a><span class="t" style="left:1276.00px;top:325.00px;font-size:11.5px;line-height:12px;transform:scaleX(0.9215);transform-origin:0 10px;color:#41445f">01/30/23</span><a class="t" style="left:1415.00px;top:325.00px;font-size:11.5px;line-height:12px;transform:scaleX(0.8581);transform-origin:0 10px;color:#4064c8">Project KAV</a><span class="t" style="left:1554.00px;top:325.00px;font-size:11.5px;line-height:12px;transform:scaleX(0.9307);transform-origin:0 10px;color:#41445f">03/03/22</span>
<a class="t" style="left:23.00px;top:351.00px;font-size:11.5px;line-height:12px;transform:scaleX(0.9120);transform-origin:0 10px;color:#4064c8">Amanda Greenberg</a><a class="t" style="left:162.00px;top:351.00px;font-size:11.5px;line-height:12px;transform:scaleX(0.9380);transform-origin:0 10px;color:#4064c8">Baloonr</a><span class="t" style="left:301.00px;top:351.00px;font-size:11.5px;line-height:12px;transform:scaleX(0.9338);transform-origin:0 10px;color:#41445f">Entrepreneur</span><span class="t" style="left:440.00px;top:351.00px;font-size:11.5px;line-height:12px;transform:scaleX(0.9029);transform-origin:0 10px;color:#41445f">Tier 1</span><a class="t" style="left:580.00px;top:351.00px;font-size:11.5px;line-height:12px;transform:scaleX(0.8629);transform-origin:0 10px;color:#4064c8">Mobile; Social; SaaS</a><a class="t" style="left:719.00px;top:351.00px;font-size:11.5px;line-height:12px;transform:scaleX(0.9033);transform-origin:0 10px;color:#4064c8">Max Haskin</a><a class="t" style="left:1136.00px;top:351.00px;font-size:11.5px;line-height:12px;transform:scaleX(0.9256);transform-origin:0 10px;color:#4064c8">amanda@baloonr.com</a><span class="t" style="left:1276.00px;top:351.00px;font-size:11.5px;line-height:12px;transform:scaleX(0.9227);transform-origin:0 10px;color:#41445f">10/01/19</span>
<a class="t" style="left:23.00px;top:377.00px;font-size:11.5px;line-height:12px;transform:scaleX(0.9074);transform-origin:0 10px;color:#4064c8">Aaron Freimark</a><a class="t" style="left:162.00px;top:377.00px;font-size:11.5px;line-height:12px;transform:scaleX(0.9433);transform-origin:0 10px;color:#4064c8">GroundControl</a><span class="t" style="left:301.00px;top:377.00px;font-size:11.5px;line-height:12px;transform:scaleX(0.9338);transform-origin:0 10px;color:#41445f">Entrepreneur</span><span class="t" style="left:440.00px;top:377.00px;font-size:11.5px;line-height:12px;transform:scaleX(0.9029);transform-origin:0 10px;color:#41445f">Tier 1</span><a class="t" style="left:580.00px;top:377.00px;font-size:11.5px;line-height:12px;transform:scaleX(0.8654);transform-origin:0 10px;color:#4064c8">SaaS; Data Analytics</a><a class="t" style="left:719.00px;top:377.00px;font-size:11.5px;line-height:12px;transform:scaleX(0.9148);transform-origin:0 10px;color:#4064c8">Adam Goodman</a><a class="t" style="left:1136.00px;top:377.00px;font-size:11.5px;line-height:12px;transform:scaleX(0.9237);transform-origin:0 10px;color:#4064c8">afreimark@groundctl...</a><span class="t" style="left:1276.00px;top:377.00px;font-size:11.5px;line-height:12px;transform:scaleX(0.9272);transform-origin:0 10px;color:#41445f">11/19/21</span>
<div class="shadow"></div>
</section>
</body></html>
